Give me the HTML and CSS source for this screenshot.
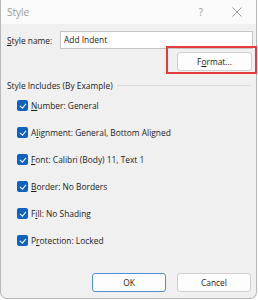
FILE: index.html
```html
<!DOCTYPE html>
<html>

<head>
  <title>Style</title>
  <link rel="stylesheet" href="styles.css">
</head>

<body>
  <div class="dialog">
    <div class="titlebar">
      <span class="title">Style</span>
      <span class="title-help">?</span>
      <svg class="title-close" width="10" height="10" viewBox="0 0 10 10">
        <path d="M0.5 0.5 L9.5 9.5 M9.5 0.5 L0.5 9.5" stroke="#9a9a9a" stroke-width="1" fill="none" />
      </svg>
    </div>
    <div class="content">
      <div class="name-row">
        <span class="label"><u>S</u>tyle name:</span>
        <div class="name-input">Add Indent</div>
      </div>
      <div class="format-row">
        <button class="btn format-btn">F<u>o</u>rmat...</button>
        <div class="highlight"></div>
      </div>
      <div class="group-head">
        <span>Style Includes (By Example)</span>
        <div class="group-line"></div>
      </div>
      <ul class="checks">
        <li><span class="box"></span><span><u>N</u>umber: General</span></li>
        <li><span class="box"></span><span>A<u>l</u>ignment: General, Bottom Aligned</span></li>
        <li><span class="box"></span><span><u>F</u>ont: Calibri (Body) 11, Text 1</span></li>
        <li><span class="box"></span><span><u>B</u>order: No Borders</span></li>
        <li><span class="box"></span><span>F<u>i</u>ll: No Shading</span></li>
        <li><span class="box"></span><span>P<u>r</u>otection: Locked</span></li>
      </ul>
      <div class="footer">
        <button class="btn btn-default">OK</button>
        <button class="btn">Cancel</button>
      </div>
    </div>
  </div>
</body>

</html>
```

FILE: styles.css
```css
/* styles.css */
body {
  margin: 0;
  background-color: #FFFFFF;
  font-family: "Open Sans", "Noto Sans", sans-serif;
  font-size: 8.4px;
  color: #1A1A1A;
}

/* Dialog window */
.dialog {
  position: relative;
  width: 255px;
  height: 298px;
  display: flex;
  flex-direction: column;
  background-color: #F0F0F0;
  border: 1px solid #B8B8B8;
  border-top: none;
  border-radius: 0 0 7px 7px;
}

/* Title bar */
.titlebar {
  height: 24px;
  display: flex;
  align-items: center;
  background-color: #FAFAFA;
  padding-left: 6px;
}

.title {
  flex: 1;
  font-size: 10px;
  color: #9A9A9A;
}

.title-help {
  font-size: 10px;
  color: #9A9A9A;
  margin-right: 29px;
}

.title-close {
  margin-right: 14px;
}

/* Content */
.content {
  flex: 1;
  display: flex;
  flex-direction: column;
  padding: 7px 3px 6px 6px;
}

.name-row {
  display: flex;
  align-items: center;
  gap: 9px;
  white-space: nowrap;
}

.label {
  width: 44px;
}

.name-input {
  flex: 1;
  height: 16px;
  line-height: 16px;
  border: 1px solid #C4C4C4;
  background-color: #FFFFFF;
  padding-left: 3px;
}

/* Format row */
.format-row {
  position: relative;
  display: flex;
  justify-content: flex-end;
  margin-top: 3px;
  padding-right: 1px;
}

.btn {
  width: 74px;
  height: 19px;
  padding: 0;
  font-family: inherit;
  font-size: 8.4px;
  color: #1A1A1A;
  background-color: #FDFDFD;
  border: 1px solid #D0D0D0;
  border-radius: 3px;
}

.format-btn {
  width: 75px;
}

/* Red annotation frame */
.highlight {
  position: absolute;
  left: 159px;
  top: -6px;
  width: 87px;
  height: 24px;
  border: 2px solid #E8393F;
}

/* Group header */
.group-head {
  display: flex;
  align-items: center;
  gap: 4px;
  margin-top: 9px;
}

.group-line {
  flex: 1;
  height: 1px;
  margin-right: 2px;
  background-color: #DCDCDC;
}

/* Checkbox list */
.checks {
  list-style: none;
  margin: 7px 0 0 0;
  padding: 0 0 0 10px;
  display: flex;
  flex-direction: column;
  gap: 13px;
}

.checks li {
  display: flex;
  align-items: center;
  gap: 3px;
  height: 14px;
}

.box {
  width: 11px;
  height: 11px;
  border-radius: 2px;
  background-color: #0F63BF;
  position: relative;
}

.box::after {
  content: "";
  position: absolute;
  left: 3.5px;
  top: 2px;
  width: 2.5px;
  height: 5px;
  border-right: 1px solid #FFFFFF;
  border-bottom: 1px solid #FFFFFF;
  transform: rotate(40deg);
}

/* Footer */
.footer {
  margin-top: auto;
  display: flex;
  justify-content: flex-end;
  gap: 11px;
  padding-right: 2px;
}

.btn-default {
  border-color: #4A8FD6;
}
```
